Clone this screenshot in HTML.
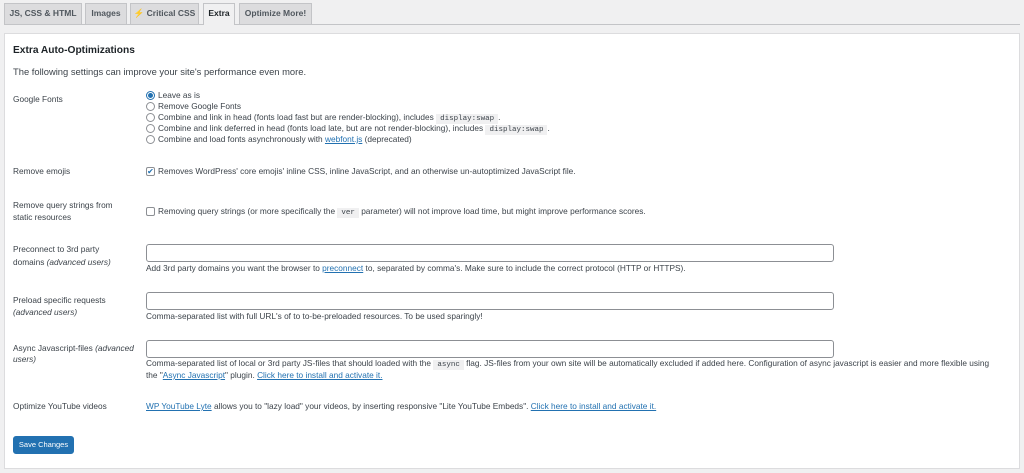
<!DOCTYPE html>
<html><head><meta charset="utf-8"><style>
*{box-sizing:border-box;margin:0;padding:0}
body{width:1024px;height:473px;background:#f0f0f1;font-family:"Liberation Sans",sans-serif;color:#3c434a;font-size:8.3px;position:relative;overflow:hidden}
.a{position:absolute;white-space:nowrap;line-height:11px}
.tab{position:absolute;top:3px;height:21px;background:#dcdcde;border:1px solid #c3c4c7;border-bottom:none;font-size:8.5px;font-weight:bold;color:#50575e;line-height:19px;text-align:center}
.tab.on{background:#f0f0f1;color:#1d2327;height:22px}
.panel{position:absolute;left:4px;top:33px;width:1016px;height:436px;background:#fff;border:1px solid #dcdcde}
.line{position:absolute;left:4px;top:24px;width:1016px;height:1px;background:#c3c4c7}
.radio{position:absolute;left:146px;width:9px;height:9px;border:1px solid #8c8f94;border-radius:50%;background:#fff}
.cb{position:absolute;left:146px;width:9px;height:9px;border:1px solid #8c8f94;border-radius:2px;background:#fff}
.in{position:absolute;left:146px;width:688px;height:18px;border:1px solid #8c8f94;border-radius:3px;background:#fff}
code{background:#f0f0f1;font-family:"Liberation Mono",monospace;font-size:7.5px;padding:1px 4px}
a{color:#2271b1;text-decoration:underline}
i{font-style:italic}
</style></head><body>
<div class="line"></div>
<div class="tab" style="left:4px;width:78px">JS, CSS &amp; HTML</div>
<div class="tab" style="left:85px;width:42px">Images</div>
<div class="tab" style="left:130px;width:69px"><span style="color:#f0b849">⚡</span> Critical CSS</div>
<div class="tab on" style="left:203px;width:32px">Extra</div>
<div class="tab" style="left:239px;width:73px">Optimize More!</div>
<div class="panel"></div>
<div class="a" style="left:13px;top:44px;font-size:10.2px;font-weight:bold;color:#1d2327;line-height:13px">Extra Auto-Optimizations</div>
<div class="a" style="left:13px;top:66px;font-size:9.4px;color:#3c434a">The following settings can improve your site's performance even more.</div>

<div class="a" style="left:13px;top:94px">Google Fonts</div>
<div class="radio" style="top:91px;border-color:#2271b1"><div style="width:5px;height:5px;background:#2271b1;border-radius:50%;margin:1px"></div></div>
<div class="radio" style="top:102px"></div><div class="radio" style="top:113px"></div><div class="radio" style="top:124px"></div><div class="radio" style="top:135px"></div>
<div class="a" style="left:158px;top:90px">Leave as is</div>
<div class="a" style="left:158px;top:101px">Remove Google Fonts</div>
<div class="a" style="left:158px;top:112px">Combine and link in head (fonts load fast but are render-blocking), includes <code>display:swap</code>.</div>
<div class="a" style="left:158px;top:123px">Combine and link deferred in head (fonts load late, but are not render-blocking), includes <code>display:swap</code>.</div>
<div class="a" style="left:158px;top:134px">Combine and load fonts asynchronously with <a>webfont.js</a> (deprecated)</div>

<div class="a" style="left:13px;top:166px">Remove emojis</div>
<div class="cb" style="top:167px;color:#2271b1;font-size:8px;line-height:7px;text-align:center">✔</div>
<div class="a" style="left:158px;top:166px">Removes WordPress' core emojis' inline CSS, inline JavaScript, and an otherwise un-autoptimized JavaScript file.</div>

<div class="a" style="left:13px;top:200px">Remove query strings from</div>
<div class="a" style="left:13px;top:212px">static resources</div>
<div class="cb" style="top:207px"></div>
<div class="a" style="left:158px;top:206px">Removing query strings (or more specifically the <code>ver</code> parameter) will not improve load time, but might improve performance scores.</div>

<div class="a" style="left:13px;top:244px">Preconnect to 3rd party</div>
<div class="a" style="left:13px;top:257px">domains <i>(advanced users)</i></div>
<div class="in" style="top:244px"></div>
<div class="a" style="left:146px;top:263px">Add 3rd party domains you want the browser to <a>preconnect</a> to, separated by comma's. Make sure to include the correct protocol (HTTP or HTTPS).</div>

<div class="a" style="left:13px;top:295px">Preload specific requests</div>
<div class="a" style="left:13px;top:307px"><i>(advanced users)</i></div>
<div class="in" style="top:292px"></div>
<div class="a" style="left:146px;top:311px">Comma-separated list with full URL's of to to-be-preloaded resources. To be used sparingly!</div>

<div class="a" style="left:13px;top:343px">Async Javascript-files <i>(advanced</i></div>
<div class="a" style="left:13px;top:354px"><i>users)</i></div>
<div class="in" style="top:340px"></div>
<div class="a" style="left:146px;top:358px">Comma-separated list of local or 3rd party JS-files that should loaded with the <code>async</code> flag. JS-files from your own site will be automatically excluded if added here. Configuration of async javascript is easier and more flexible using</div>
<div class="a" style="left:146px;top:370px">the "<a>Async Javascript</a>" plugin. <a>Click here to install and activate it.</a></div>

<div class="a" style="left:13px;top:401px">Optimize YouTube videos</div>
<div class="a" style="left:146px;top:401px"><a>WP YouTube Lyte</a> allows you to "lazy load" your videos, by inserting responsive "Lite YouTube Embeds". <a>Click here to install and activate it.</a></div>

<div style="position:absolute;left:13px;top:436px;width:61px;height:18px;background:#2271b1;border:1px solid #2271b1;border-radius:3px;color:#fff;font-size:7.5px;line-height:16px;text-align:center">Save Changes</div>
</body></html>
